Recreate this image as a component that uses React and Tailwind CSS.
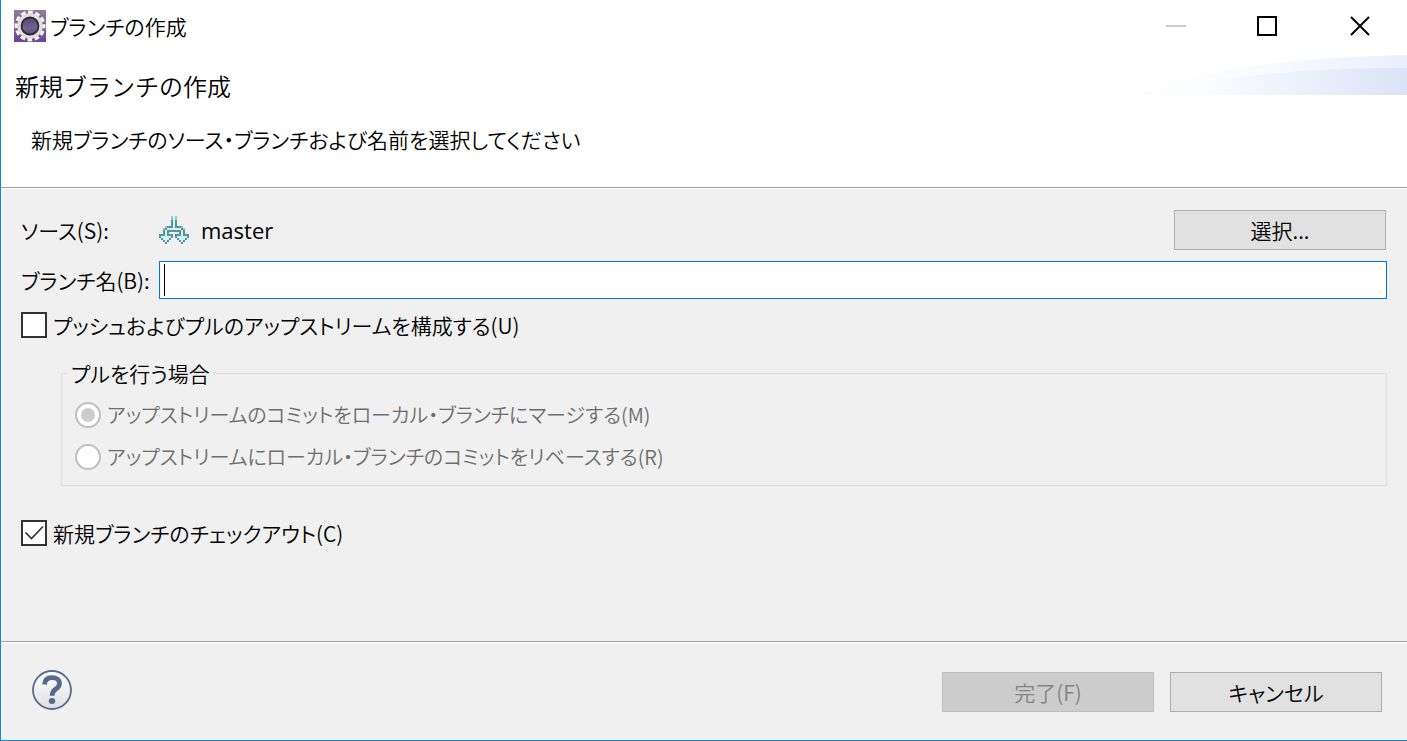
import React, { useState } from 'react'

// d = outline, m = soft edge, l = fill
const BRANCH_PIXELS = [
  '......m.m......',
  '......mlm......',
  '......dld......',
  '......dld......',
  '......dld......',
  '...mdddldddm...',
  '..mdllllllldm..',
  '..dldddddddld..',
  '..dld.....dld..',
  'dddlddd.dddlddd',
  'dllllld.dllllld',
  '.dllld...dllld.',
  '..dld.....dld..',
  '...d.......d...'
]

const PIXEL_COLORS = { d: '#5f9393', m: '#9cc3c3', l: '#c8f4f8' }

const BranchIcon = () => (
  <svg viewBox="0 0 15 14" className="h-7 w-[30px]" shapeRendering="crispEdges" aria-hidden="true">
    {BRANCH_PIXELS.map((row, y) =>
      row.split('').map((cell, x) =>
        PIXEL_COLORS[cell] ? (
          <rect key={`${x}-${y}`} x={x} y={y} width="1" height="1" fill={PIXEL_COLORS[cell]} />
        ) : null
      )
    )}
  </svg>
)

const AppIcon = () => (
  <svg viewBox="0 0 32 32" className="h-8 w-8" aria-hidden="true">
    <defs>
      <linearGradient id="app-bg" x1="0" y1="0" x2="0" y2="1">
        <stop offset="0" stopColor="#8f7f9c" />
        <stop offset="1" stopColor="#6a4596" />
      </linearGradient>
      <linearGradient id="app-core" x1="0" y1="0" x2="0" y2="1">
        <stop offset="0" stopColor="#4a4363" />
        <stop offset="0.6" stopColor="#6f6394" />
        <stop offset="1" stopColor="#544a75" />
      </linearGradient>
    </defs>
    <rect width="32" height="32" fill="url(#app-bg)" />
    <circle cx="16" cy="16" r="13.5" fill="none" stroke="#f4f2ee" strokeWidth="4" strokeDasharray="4.6 2.468" strokeDashoffset="2.3" />
    <circle cx="16" cy="16" r="10.5" fill="url(#app-core)" stroke="#e2dedc" strokeWidth="4.5" />
    <circle cx="16" cy="16" r="8.5" fill="none" stroke="#2c2638" strokeWidth="1.8" />
  </svg>
)

const HeaderSwoosh = () => (
  <svg viewBox="0 0 277 40" className="h-10 w-[277px]" aria-hidden="true">
    <defs>
      <linearGradient id="swoosh-a" x1="0" x2="1">
        <stop offset="0.1" stopColor="#ffffff" />
        <stop offset="0.5" stopColor="#f8fafe" />
        <stop offset="1" stopColor="#e9effb" />
      </linearGradient>
      <linearGradient id="swoosh-b" x1="0" x2="1">
        <stop offset="0.25" stopColor="#fcfdff" />
        <stop offset="1" stopColor="#dbe3f7" />
      </linearGradient>
    </defs>
    <path d="M0 40 C80 12 170 2 277 0 V40 Z" fill="url(#swoosh-a)" />
    <path d="M0 40 C55 27 100 22 150 18 C190 14 235 13 277 13 V40 Z" fill="url(#swoosh-b)" />
  </svg>
)

const HelpIcon = () => (
  <svg viewBox="0 0 40 40" className="h-10 w-10" aria-hidden="true">
    <defs>
      <linearGradient id="help-bg" x1="0" y1="0" x2="0" y2="1">
        <stop offset="0" stopColor="#ffffff" />
        <stop offset="1" stopColor="#e0e0e0" />
      </linearGradient>
    </defs>
    <circle cx="20" cy="20" r="19" fill="url(#help-bg)" stroke="#566a8c" strokeWidth="1.8" />
    <path d="M12.5 14.5 C12.8 9.5 16 7.6 20 7.6 C24.5 7.6 27.5 9.8 27.5 13.4 C27.5 16.4 25.6 17.8 23.2 19.4 C21 20.9 20.2 22 20.2 25.8" fill="none" stroke="#566a8c" strokeWidth="4.8" />
    <ellipse cx="20" cy="31" rx="3.3" ry="3" fill="#566a8c" />
  </svg>
)

const CheckBox = ({ id, label, checked, onChange }) => (
  <div className="flex h-9 items-center gap-1.5">
    <span className="relative h-[26px] w-[26px]">
      <input
        id={id}
        type="checkbox"
        checked={checked}
        onChange={(e) => onChange(e.target.checked)}
        className="block h-[26px] w-[26px] appearance-none border-2 border-[#333333] bg-white"
      />
      {checked && (
        <svg viewBox="0 0 26 26" className="pointer-events-none absolute inset-0 h-[26px] w-[26px]" aria-hidden="true">
          <path d="M4.5 12.5 L10.5 18.5 L22 6.5" fill="none" stroke="#333333" strokeWidth="1.7" />
        </svg>
      )}
    </span>
    <label htmlFor={id}>{label}</label>
  </div>
)

const PullOption = ({ id, label, defaultChecked }) => (
  <div className="flex h-[42px] items-center gap-1.5">
    <span className="relative h-[26px] w-[26px]">
      <input
        id={id}
        type="radio"
        name="pull"
        disabled
        defaultChecked={defaultChecked}
        className="peer block h-[26px] w-[26px] appearance-none rounded-full border-2 border-[#bfbfbf] bg-white"
      />
      <span className="pointer-events-none absolute inset-1.5 hidden rounded-full bg-[#cccccc] peer-checked:block" />
    </span>
    <label htmlFor={id} className="text-xl leading-9 text-[#6d6d6d]">{label}</label>
  </div>
)

const Button = ({ children, disabled }) => (
  <button
    type="button"
    disabled={disabled}
    className="h-10 w-[212px] border border-[#adadad] bg-[#e1e1e1] disabled:border-[#bfbfbf] disabled:bg-[#cccccc] disabled:text-[#838383]"
  >
    {children}
  </button>
)

const App = () => {
  const [name, setName] = useState('')
  const [upstream, setUpstream] = useState(false)
  const [checkout, setCheckout] = useState(true)

  return (
    <div className="flex min-h-screen flex-col border-b border-l border-[#1883d7] bg-[#f0f0f0] font-['Noto_Sans_CJK_JP',sans-serif] text-[21px] leading-9 font-[350] text-black [font-feature-settings:'palt']">
      <header className="border-b border-[#a0a0a0] bg-white">
        <div className="flex h-[55px] items-start justify-between pt-2">
          <div className="flex items-center gap-1 pl-[13px]">
            <AppIcon />
            <span>ブランチの作成</span>
          </div>
          <div className="flex h-9 items-center gap-[70px] pr-9">
            <button type="button" aria-label="最小化" disabled>
              <svg viewBox="0 0 22 22" className="h-[22px] w-[22px]"><path d="M1 11 H21" stroke="#cccccc" strokeWidth="2" /></svg>
            </button>
            <button type="button" aria-label="最大化">
              <svg viewBox="0 0 22 22" className="h-[22px] w-[22px]"><rect x="1" y="2" width="18" height="18" fill="none" stroke="#000000" strokeWidth="2" /></svg>
            </button>
            <button type="button" aria-label="閉じる">
              <svg viewBox="0 0 22 22" className="h-[22px] w-[22px]"><path d="M2 2 L20 20 M20 2 L2 20" stroke="#000000" strokeWidth="2" /></svg>
            </button>
          </div>
        </div>
        <div className="flex items-start justify-between pb-[30px]">
          <div className="pt-[13px] pl-3.5">
            <h1 className="text-2xl leading-9 [font-feature-settings:normal]">新規ブランチの作成</h1>
            <p className="pt-[17px] pl-4">新規ブランチのソース・ブランチおよび名前を選択してください</p>
          </div>
          <HeaderSwoosh />
        </div>
      </header>

      <main className="flex-1 border-t border-white pt-[21px] pr-5 pl-5">
        <div className="grid grid-cols-[138px_1fr] items-center gap-y-[11px]">
          <span>ソース(S):</span>
          <div className="flex items-center justify-between pr-px">
            <div className="flex items-center gap-3">
              <BranchIcon />
              <span className="font-['Open_Sans',sans-serif] text-[22px] font-normal">master</span>
            </div>
            <Button>選択...</Button>
          </div>
          <label htmlFor="branch-name" className="whitespace-nowrap">ブランチ名(B):</label>
          <div className="relative">
            <input
              id="branch-name"
              type="text"
              value={name}
              onChange={(e) => setName(e.target.value)}
              className="block h-[38px] w-full border border-[#0078d7] bg-white px-1 caret-transparent outline-none"
            />
            {name === '' && <span className="pointer-events-none absolute top-[3px] left-[5px] h-8 w-px bg-black" />}
          </div>
        </div>

        <div className="pt-2">
          <CheckBox id="upstream" label="プッシュおよびプルのアップストリームを構成する(U)" checked={upstream} onChange={setUpstream} />
        </div>

        <fieldset className="mt-[14px] ml-10 border border-[#dcdcdc] px-[13px] pt-[5px] pb-[7px]">
          <legend className="-ml-2 px-1 leading-8">プルを行う場合</legend>
          <PullOption id="pull-merge" label="アップストリームのコミットをローカル・ブランチにマージする(M)" defaultChecked />
          <PullOption id="pull-rebase" label="アップストリームにローカル・ブランチのコミットをリベースする(R)" />
        </fieldset>

        <div className="pt-[29px]">
          <CheckBox id="checkout" label="新規ブランチのチェックアウト(C)" checked={checkout} onChange={setCheckout} />
        </div>
      </main>

      <footer className="border-t border-[#a0a0a0]">
        <div className="flex items-start justify-between border-t border-white pt-[27px] pr-[25px] pb-7 pl-[31px]">
          <button type="button" aria-label="ヘルプ">
            <HelpIcon />
          </button>
          <div className="flex gap-4 pt-0.5">
            <Button disabled>完了(F)</Button>
            <Button>キャンセル</Button>
          </div>
        </div>
      </footer>
    </div>
  )
}

export default App
